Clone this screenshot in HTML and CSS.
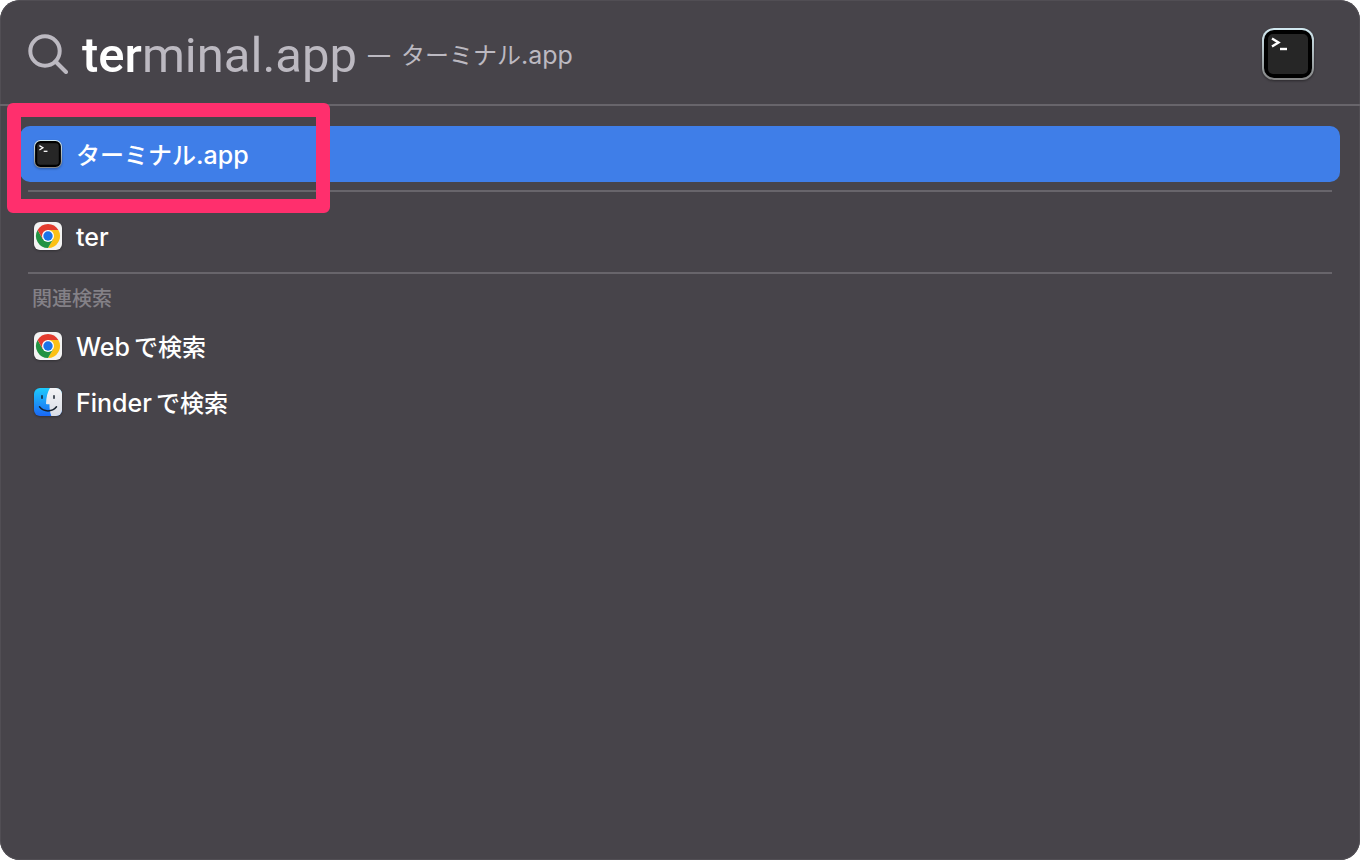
FILE: index.html
```html
<!DOCTYPE html>
<html lang="ja">
<head>
    <meta charset="UTF-8">
    <meta name="viewport" content="width=device-width, initial-scale=1.0">
    <title>Spotlight</title>
    <link rel="stylesheet" href="styles.css">
</head>
<body>
    <!-- shared icon shapes -->
    <svg class="defs" width="0" height="0" aria-hidden="true">
        <defs>
            <linearGradient id="rim" x1="0" y1="0" x2="0" y2="1">
                <stop offset="0" stop-color="#d3eaf2"/>
                <stop offset="1" stop-color="#858585"/>
            </linearGradient>
            <linearGradient id="finder-blue" x1="0" y1="0" x2="0" y2="1">
                <stop offset="0" stop-color="#1dcbfc"/>
                <stop offset="1" stop-color="#1a68f5"/>
            </linearGradient>
            <linearGradient id="finder-white" x1="0" y1="0" x2="0" y2="1">
                <stop offset="0" stop-color="#f4f4f6"/>
                <stop offset="1" stop-color="#d9dde6"/>
            </linearGradient>
            <clipPath id="tile"><rect width="28" height="28" rx="6"/></clipPath>
        </defs>
        <symbol id="terminal" viewBox="0 0 52 52">
            <rect width="52" height="52" rx="12" fill="url(#rim)"/>
            <rect x="2" y="2" width="48" height="48" rx="10" fill="#000"/>
            <rect x="6" y="6" width="40" height="40" rx="5" fill="#262626"/>
            <path d="M10 10.500L16.500 14.500L10 18.500" fill="none" stroke="#fff" stroke-width="2.400"/>
            <path d="M18 21H25" stroke="#fff" stroke-width="2.400"/>
        </symbol>
        <symbol id="chrome" viewBox="0 0 28 28">
            <rect width="28" height="28" rx="6" fill="#f3f3f3"/>
            <path d="M14 8H24.400A12 12 0 0 1 14 26L19.200 17Z" fill="#fbc116"/>
            <path d="M19.200 17L14 26A12 12 0 0 1 3.600 8L8.800 17Z" fill="#229342"/>
            <path d="M8.800 17L3.600 8A12 12 0 0 1 24.400 8H14Z" fill="#e33b2e"/>
            <circle cx="14" cy="14" r="6" fill="#fff"/>
            <circle cx="14" cy="14" r="4.700" fill="#1a73e8"/>
        </symbol>
        <symbol id="finder" viewBox="0 0 28 28">
            <g clip-path="url(#tile)">
                <rect width="28" height="28" fill="url(#finder-blue)"/>
                <path d="M16 0C13.500 4 12.300 9 12 15.500Q12 16.200 12.800 16.200H15.500C15.400 20 15.900 24 17.300 28H28V0Z" fill="url(#finder-white)"/>
            </g>
            <path d="M8 7.800V10.300M20 7.800V10.300" fill="none" stroke="#16202c" stroke-width="1.500" stroke-linecap="round"/>
            <path d="M5.500 18.800C10 24.300 18 24.300 22.500 18.800" fill="none" stroke="#16202c" stroke-width="1.500" stroke-linecap="round"/>
        </symbol>
    </svg>

    <main class="spotlight">
        <form class="search-bar">
            <svg class="search-icon" viewBox="0 0 40 40" aria-hidden="true">
                <circle cx="17" cy="17" r="14.700"/>
                <path d="M27.500 27.500L38 38"/>
            </svg>
            <label class="query">
                <input type="text" class="query-input" value="ter" aria-label="検索" autocomplete="off">
                <span class="completion">minal.app</span>
            </label>
            <span class="dash">—</span>
            <span class="top-hit"><span class="jp">ターミナル</span>.app</span>
            <svg class="app-icon" aria-hidden="true"><use href="#terminal"/></svg>
        </form>

        <div class="results">
            <button type="button" class="result selected">
                <svg class="icon" aria-hidden="true"><use href="#terminal"/></svg>
                <span class="name"><span class="jp">ターミナル</span>.app</span>
            </button>
            <hr>
            <button type="button" class="result">
                <svg class="icon" aria-hidden="true"><use href="#chrome"/></svg>
                <span class="name">ter</span>
            </button>
            <hr>
            <h2>関連検索</h2>
            <button type="button" class="result">
                <svg class="icon" aria-hidden="true"><use href="#chrome"/></svg>
                <span class="name action">Web <span class="jp">で検索</span></span>
            </button>
            <button type="button" class="result">
                <svg class="icon" aria-hidden="true"><use href="#finder"/></svg>
                <span class="name action">Finder <span class="jp">で検索</span></span>
            </button>
            <div class="marker"></div>
        </div>
    </main>
</body>
</html>
```
FILE: styles.css
```css
* {
    box-sizing: border-box;
}

body {
    margin: 0;
    background-color: #fff;
    font-family: Inter, "Noto Sans CJK JP", sans-serif;
    color: #fff;
}

.defs {
    position: absolute;
}

.spotlight {
    min-height: 100vh;
    background-color: #47444a;
    border-radius: 20px;
    box-shadow: inset 0 0 0 1px #514e54;
}

.search-bar {
    display: flex;
    align-items: center;
    height: 106px;
    padding: 4px 46px 0 28px;
    border-bottom: 2px solid #68656b;
}

.search-icon {
    width: 40px;
    height: 40px;
    margin-right: 14px;
    fill: none;
    stroke: #bcb9c1;
    stroke-width: 4;
    stroke-linecap: round;
}

.query {
    display: flex;
    padding-top: 4px;
    font-family: Roboto, Inter, sans-serif;
    font-size: 49px;
    line-height: 64px;
}

.query-input {
    field-sizing: content;
    height: 64px;
    padding: 0;
    border: none;
    outline: none;
    background: none;
    font: inherit;
    font-weight: 500;
    color: #fff;
}

.completion,
.dash,
.top-hit {
    color: #bcb9c1;
}

.dash,
.top-hit {
    padding-top: 2px;
    line-height: 28px;
}

.dash {
    margin: 0 11px;
    font-size: 22px;
    font-weight: 500;
}

.top-hit {
    font-size: 25px;
}

.jp {
    font-size: 24px;
    line-height: 1;
}

.app-icon {
    width: 52px;
    height: 52px;
    margin-left: auto;
    filter: drop-shadow(0 1px 1px rgba(0, 0, 0, 0.4));
}

.results {
    position: relative;
    padding: 20px;
}

.result {
    display: flex;
    align-items: center;
    gap: 14px;
    width: 100%;
    height: 56px;
    padding: 0 14px;
    border: none;
    border-radius: 10px;
    background: none;
    font-family: inherit;
    font-size: 25px;
    font-weight: 500;
    color: #fff;
    text-align: left;
}

.selected {
    background-color: #3f7ee8;
}

.icon {
    width: 28px;
    height: 28px;
    filter: drop-shadow(0 1px 1px rgba(0, 0, 0, 0.3));
}

.name {
    padding-top: 2px;
    line-height: 28px;
}

.action {
    display: flex;
    align-items: baseline;
    gap: 4px;
}

hr {
    height: 2px;
    margin: 8px 8px 16px;
    border: none;
    background-color: #68656b;
}

h2 {
    margin: 0 12px;
    font-size: 20px;
    font-weight: 500;
    line-height: 28px;
    color: #848187;
}

hr:has(+ h2) {
    margin-bottom: 11px;
}

h2 + .result {
    margin-top: 5px;
}

/* pink frame round the top result */
.marker {
    position: absolute;
    top: -3px;
    left: 7px;
    width: 323px;
    height: 110px;
    border: 14px solid #ff2f6d;
    border-radius: 6px;
    pointer-events: none;
}
```
